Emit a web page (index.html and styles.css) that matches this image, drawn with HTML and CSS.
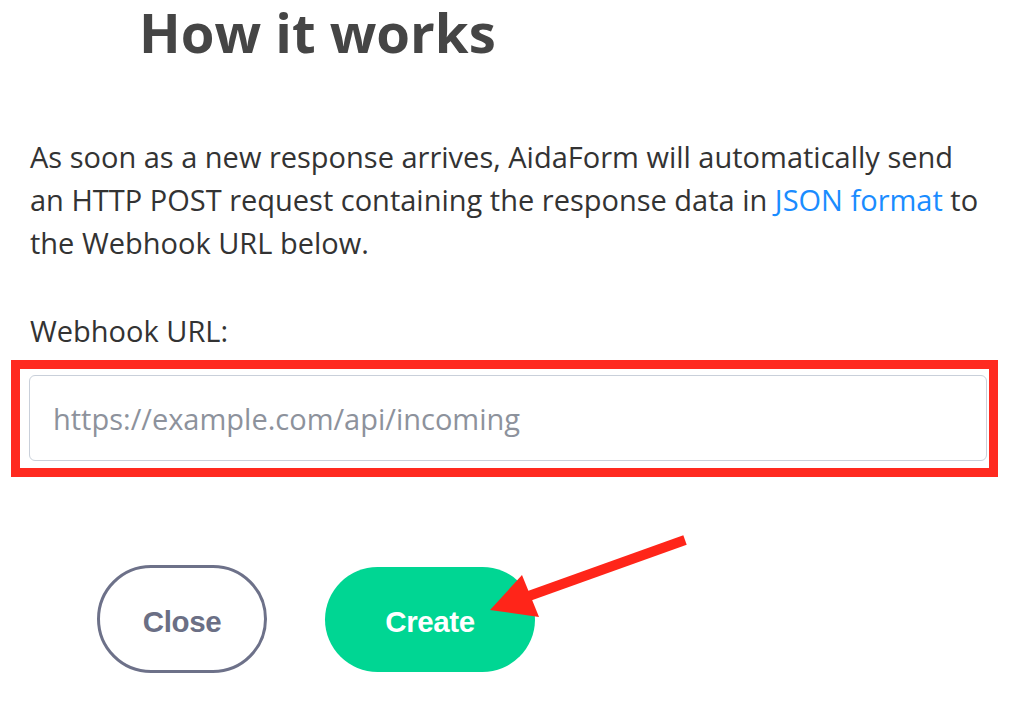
FILE: index.html
```html
<!DOCTYPE html>
<html lang="en">
<head>
<meta charset="utf-8">
<title>How it works</title>
<link rel="stylesheet" href="styles.css">
</head>
<body>
<main class="page">
  <h1 class="title">How it works</h1>
  <p class="intro">As soon as a new response arrives, AidaForm will automatically send an HTTP POST request containing the response data in <a class="link" href="#">JSON format</a> to the Webhook URL below.</p>
  <label class="label" for="webhook">Webhook URL:</label>
  <div class="highlight">
    <input class="url-input" id="webhook" type="text" placeholder="https://example.com/api/incoming">
  </div>
  <div class="actions">
    <button class="btn btn-close" type="button">Close</button>
    <button class="btn btn-create" type="button">Create</button>
  </div>
  <svg class="arrow" width="1024" height="712" viewBox="0 0 1024 712" aria-hidden="true">
    <line x1="685" y1="540" x2="526" y2="597" stroke="#ff2519" stroke-width="10"/>
    <polygon points="490,610 522,575 539,617" fill="#ff2519"/>
  </svg>
</main>
</body>
</html>
```

FILE: styles.css
```css
html, body {
  margin: 0;
  padding: 0;
  background: #ffffff;
}

.page {
  position: relative;
  width: 1024px;
  height: 712px;
  overflow: hidden;
  font-family: "Open Sans", "DejaVu Sans", sans-serif;
  color: #333333;
}

.title {
  margin: 0 0 0 139px;
  padding: 0;
  font-family: "Open Sans", sans-serif;
  font-weight: 700;
  font-size: 54.5px;
  line-height: 64px;
  color: #454545;
  letter-spacing: 0;
}

.intro {
  margin: 71px 0 0 30px;
  width: 952px;
  font-size: 29px;
  line-height: 43px;
  color: #333333;
}

.link {
  color: #1a8cff;
  text-decoration: none;
}

.label {
  display: block;
  margin: 45px 0 0 30px;
  font-size: 29px;
  line-height: 43px;
  color: #333333;
}

.highlight {
  margin: 8px 0 0 11px;
  width: 987px;
  box-sizing: border-box;
  border: 9px solid #ff2a20;
  padding: 6px 3px 7px 9px;
  background: #ffffff;
}

.url-input {
  display: block;
  box-sizing: border-box;
  width: 958px;
  height: 86px;
  margin: 0;
  padding: 0 0 0 23px;
  border: 1.5px solid #c9d0da;
  border-radius: 6px;
  background: #ffffff;
  font-family: "Open Sans", sans-serif;
  font-size: 29px;
  color: #333333;
  outline: none;
}

.url-input::placeholder {
  color: #8d929c;
  opacity: 1;
}

.actions {
  display: flex;
  align-items: center;
  gap: 58px;
  margin: 88px 0 0 97px;
}

.btn {
  box-sizing: border-box;
  margin: 0;
  padding: 6px 0 0;
  border-radius: 60px;
  font-family: "Liberation Sans", Arial, sans-serif;
  font-weight: 700;
  font-size: 29.5px;
  letter-spacing: -0.4px;
  cursor: pointer;
}

.btn-close {
  width: 170px;
  height: 108px;
  border: 3px solid #6d7189;
  background: #ffffff;
  color: #6b6f85;
}

.btn-create {
  width: 210px;
  height: 105px;
  border: none;
  background: #00d693;
  color: #ffffff;
}

.arrow {
  position: absolute;
  left: 0;
  top: 0;
  pointer-events: none;
}
```
